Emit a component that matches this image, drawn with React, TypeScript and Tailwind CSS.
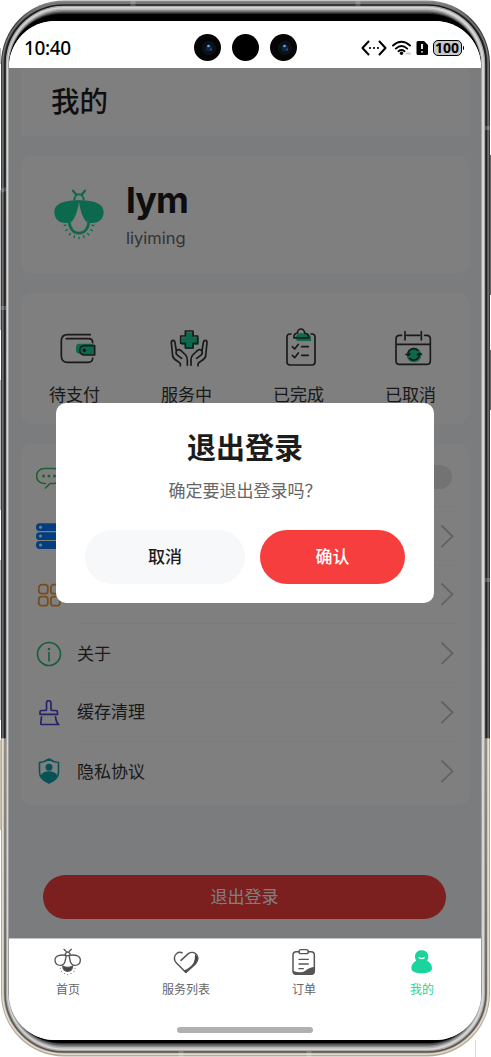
import type { ReactNode } from "react";
import { twMerge } from "tailwind-merge";

const FONT = "font-['Open_Sans','Noto_Sans_CJK_SC',sans-serif]";

export default function App() {
  return (
    <div
      className={twMerge(
        "relative w-[491px] h-[1057px] overflow-hidden bg-white pt-[21px] pl-[9px] pr-[10px] pb-[17px]",
        FONT,
      )}
    >
      <DeviceFrame />
      <div className="relative flex h-full flex-col overflow-hidden rounded-[46px] bg-white">
        <StatusBar />
        <main className="relative flex-1 bg-[#f7f8fa] px-3">
          <header className="h-[68px] bg-white pl-[30px] pt-[11px] text-[28.500px] leading-[44px] font-medium text-[#1f1f1f]">
            我的
          </header>
          <ProfileCard />
          <OrderCard />
          <MenuCard />
          <button className="mt-[70px] ml-[22px] block h-11 w-[403px] rounded-full bg-[#f63e3e] text-[17px] text-white">
            退出登录
          </button>
          <LogoutDialog />
        </main>
        <TabBar />
      </div>
    </div>
  );
}

function DeviceFrame() {
  return (
    <svg className="absolute inset-0" width="491" height="1057" viewBox="0 0 491 1057" fill="none">
      <defs>
        <linearGradient id="shell" x1="0" y1="0" x2="0" y2="1057" gradientUnits="userSpaceOnUse">
          <stop offset="0" stopColor="#8d918d" />
          <stop offset="0.02" stopColor="#3b3d3e" />
          <stop offset="0.698" stopColor="#34363a" />
          <stop offset="0.699" stopColor="#b3aa9b" />
          <stop offset="1" stopColor="#b3aa9b" />
        </linearGradient>
        <linearGradient id="shine" x1="0" y1="0" x2="0" y2="1057" gradientUnits="userSpaceOnUse">
          <stop offset="0" stopColor="#777" />
          <stop offset="0.698" stopColor="#6b6d6f" />
          <stop offset="0.699" stopColor="#ece6da" />
          <stop offset="1" stopColor="#e2dccf" />
        </linearGradient>
        <linearGradient id="seam" x1="0" y1="0" x2="0" y2="1057" gradientUnits="userSpaceOnUse">
          <stop offset="0" stopColor="#1b1b1b" />
          <stop offset="0.698" stopColor="#1f2022" />
          <stop offset="0.699" stopColor="#8f887c" />
          <stop offset="1" stopColor="#55524d" />
        </linearGradient>
      </defs>
      {/* side buttons and antenna lines */}
      <path d="M0 48v16M0 190v140M0 380v130M0 560v160" stroke="#777" />
      <path d="M0 740v90" stroke="#c9c1b2" strokeWidth="2" />
      <path d="M490.500 155v140M490.500 350v60" stroke="#666" />
      <path d="M475.500 1040v17" stroke="#ddd" />
      <rect x="1" y="0.500" width="489" height="1056" rx="63" fill="url(#shell)" />
      <rect x="2.800" y="2.800" width="485.400" height="1051.400" rx="61" stroke="url(#shine)" strokeWidth="1.400" />
      <rect x="5" y="5" width="481" height="1047" rx="59" fill="#999" stroke="url(#seam)" strokeWidth="1.600" />
      <rect x="6" y="6" width="479" height="1045" rx="58" fill="#aaa" />
      <rect x="7" y="7" width="477" height="1043" rx="57" fill="#d8d6d4" />
      <rect x="8" y="8.500" width="474" height="1040" rx="56" fill="#b4b4b4" />
      <rect x="8.500" y="10" width="473" height="1037" rx="55" fill="#8a8a8a" />
      <rect x="9" y="11.500" width="472" height="1034" rx="54" fill="#555" />
      <rect x="9" y="12.800" width="472" height="1031" rx="53" fill="#2a2a2a" />
      <rect x="9" y="14" width="472" height="1029" rx="52" fill="#000" />
      <path d="M133 1v5M358 1v5M181 1051v6M309 1051v6" stroke="#fff" strokeOpacity="0.18" strokeWidth="5" />
      <path d="M1 191l5-2M1 308h5M485 128h5M485 580h5" stroke="#fff" strokeOpacity="0.2" strokeWidth="4" />
    </svg>
  );
}

function StatusBar() {
  return (
    <div className="relative flex h-[47px] shrink-0 items-center bg-white pt-[6px] pl-[15px] pr-[17px] text-black">
      <span className="font-['Noto_Sans',sans-serif] text-[19px] leading-6 font-medium tracking-[-0.4px]">10:40</span>
      <div className="absolute top-[13px] left-[185px] flex gap-[11px]">
        <Camera />
        <span className="size-[27px] rounded-full bg-black" />
        <Camera />
      </div>
      <div className="ml-auto flex items-center">
        <svg width="26" height="16" viewBox="0 0 26 16" fill="none" stroke="#000" strokeWidth="2" strokeLinecap="round" strokeLinejoin="round">
          <path d="M7.500 1.500L1.500 8l6 6.500M18.500 1.500l6 6.500-6 6.500" />
          <path d="M9 8h.01M13 8h.01M17 8h.01" strokeWidth="2.200" />
        </svg>
        <svg className="ml-[5px]" width="20" height="16" viewBox="0 0 20 16" fill="none" stroke="#000" strokeWidth="1.900" strokeLinecap="round">
          <path d="M1 5.500Q9.500-2 18 5.500M3.800 8.600Q9.500 3.500 15.200 8.600M6.500 11.200q3-2.300 6 0" />
          <circle cx="9.500" cy="13.300" r="1.700" fill="#000" stroke="none" />
          <path d="M14.500 13.500h3.500" stroke="#ccc" />
        </svg>
        <svg className="ml-[4px]" width="12" height="14" viewBox="0 0 12 14">
          <path d="M2 0h6l4 4v8.500a1.500 1.500 0 0 1-1.500 1.500H2a1.500 1.500 0 0 1-1.500-1.500V1.500A1.500 1.500 0 0 1 2 0Z" />
          <path d="M6 3v5M6 10.200v1.300" stroke="#fff" strokeWidth="1.800" />
        </svg>
        <div className="ml-[5px] flex h-4 w-[29px] items-center justify-center rounded-[5px] border border-black bg-[#c8c8c8] pt-px font-['Noto_Sans',sans-serif] text-[14px] leading-none font-bold">
          100
        </div>
        <span className="ml-px h-1 w-[1.500px] rounded-r bg-black" />
      </div>
    </div>
  );
}

function Camera() {
  return (
    <svg width="27" height="27" viewBox="0 0 27 27">
      <circle cx="13.500" cy="13.500" r="13.500" fill="#050506" />
      <circle cx="15" cy="14" r="6.500" fill="#0a0f18" stroke="#121418" />
      <circle cx="15" cy="14" r="3.500" fill="#10233f" />
      <circle cx="14.500" cy="12" r="1.300" fill="#6fa6ea" />
      <circle cx="17" cy="15.500" r="0.900" fill="#2e5fa8" />
    </svg>
  );
}

function ProfileCard() {
  return (
    <section className="mt-5 flex h-[117px] items-center rounded-[10px] bg-white pl-[33px]">
      <svg width="50" height="52" viewBox="0 0 150 156" fill="none" stroke="#1bd39c">
        <path d="M75 33C40 35 1 38 1 70c0 22 18 37 45 31h58c27 6 45-9 45-31 0-32-39-35-74-37Z" fill="#1bd39c" stroke="none" />
        <path d="M46 98c1 46 57 46 58 0" fill="#fff" strokeWidth="8" />
        <path d="M75 37c-3 26-9 44-23 64h46C84 81 78 63 75 37Z" fill="#fff" stroke="none" />
        <path d="M61 34c0-24 28-24 28 0" strokeWidth="6" />
        <path d="M67 17L57 5M83 17L93 5" strokeWidth="7" strokeLinecap="round" />
        <path d="M29 110l8-2M34 126l7-5M45 139l5-7M59 147l3-8M75 151v-8M91 147l-3-8M105 139l-5-7M116 126l-7-5M121 110l-8-2" strokeWidth="4" />
      </svg>
      <div className="ml-[22px] font-['Inter',sans-serif]">
        <div className="text-[36px] leading-[42px] font-bold tracking-[-0.9px] text-[#1c1c1c]">lym</div>
        <div className="mt-[5px] text-[16.500px] leading-6 text-[#666]">liyiming</div>
      </div>
    </section>
  );
}

const orders: { label: string; icon: ReactNode }[] = [
  {
    label: "待支付",
    icon: (
      <>
        <rect x="57" y="47" width="54" height="30" rx="10" fill="#1bd39c" stroke="none" />
        <path d="M100 20H32q-19 0-19 19v45q0 19 19 19h62q13 0 13-13M28 32h67q12 0 12 12" />
        <path d="M112 53H82a14 14 0 0 0 0 28h31V53Z" fill="#1bd39c" />
        <circle cx="82" cy="67" r="3" fill="#333" />
      </>
    ),
  },
  {
    label: "服务中",
    icon: (
      <>
        <path d="M50 13h25v15h14v23H75v12H50V51H38V28h12Z" fill="#1bd39c" stroke="none" />
        <path d="M49 9h23v15h14v22H72v14H49V46H35V24h14Z" />
        <path d="M34 113v-6C28 99 13 96 11 84L7 44q0-7 5-7t6 7l4 25M22 69q6-8 14-1l14 13q5 6 5 16v15M22 69q-3 8 4 13l12 9" />
        <path d="M87 113v-6c6-8 21-11 23-23l4-40q0-7-5-7t-6 7l-4 25M99 69q-6-8-14-1L71 81q-5 6-5 16v15M99 69q3 8-4 13l-12 9" />
      </>
    ),
  },
  {
    label: "已完成",
    icon: (
      <>
        <path d="M42 28l10-12h28l10 10v13H48Z" fill="#1bd39c" stroke="none" />
        <path d="M30 18h-3q-9 0-9 9v75q0 9 9 9h66q9 0 9-9V27q0-9-9-9h-3" />
        <path d="M39 30h44q2-12-12-15-2-12-11-12t-11 12q-12 3-10 15Z" />
        <path d="M34 56l7 7 11-14M62 56h20M34 82l7 7 11-14M62 82h20" />
      </>
    ),
  },
  {
    label: "已取消",
    icon: (
      <>
        <circle cx="63" cy="81" r="22" fill="#1bd39c" stroke="none" />
        <path d="M26 22h-6Q9 22 9 33v65q0 11 11 11h81q11 0 11-11V33q0-11-11-11h-6M41 22h39M36 11v25M85 11v25M10 49h101" />
        <path d="M45 80a17 17 0 0 1 29-13M79 78a17 17 0 0 1-29 13M39 79l6 3 6-4M73 80l6-4 6 3" />
      </>
    ),
  },
];

function OrderCard() {
  return (
    <section className="mt-5 grid h-[131px] grid-cols-4 rounded-[10px] bg-white pt-[35px]">
      {orders.map((order) => (
        <div key={order.label} className="flex flex-col items-center">
          <svg width="40" height="40" viewBox="0 0 120 120" fill="none" stroke="#333" strokeWidth="5" strokeLinecap="round" strokeLinejoin="round">
            {order.icon}
          </svg>
          <span className="mt-[15px] pr-[5px] text-[17px] leading-6 text-[#333]">{order.label}</span>
        </div>
      ))}
    </section>
  );
}

type MenuItem = { id: string; label?: string; toggle?: boolean; icon: ReactNode };

const menu: MenuItem[] = [
  {
    id: "chat",
    toggle: true,
    icon: (
      <g stroke="#3bbf5c" strokeWidth="1.600">
        <path d="M9.500 19.500H8A7.500 7.500 0 0 1 8 4.500h10a7.500 7.500 0 0 1 0 15h-4l-4.500 4.500" />
        <path d="M7.500 12h.01M13 12h.01M18.500 12h.01" strokeWidth="3" />
      </g>
    ),
  },
  {
    id: "service",
    icon: (
      <g fill="#0a7cff">
        <rect x="0" y="0.300" width="26" height="7.800" rx="3.600" />
        <rect x="0" y="9.200" width="26" height="7.800" rx="3.600" />
        <rect x="0" y="18.100" width="26" height="7.800" rx="3.600" />
        <path d="M4.500 4.200h.01M4.500 13.100h.01M4.500 22h.01" stroke="#fff" strokeWidth="3" />
      </g>
    ),
  },
  {
    id: "apps",
    icon: (
      <g stroke="#eb9a3c" strokeWidth="1.800">
        <rect x="2.800" y="2.700" width="9" height="9" rx="2.800" />
        <rect x="14.800" y="2.700" width="9" height="9" rx="2.800" />
        <rect x="2.800" y="14.700" width="9" height="9" rx="2.800" />
        <rect x="14.800" y="14.700" width="9" height="9" rx="2.800" />
      </g>
    ),
  },
  {
    id: "about",
    label: "关于",
    icon: (
      <g stroke="#2ebc6f" strokeWidth="1.600">
        <circle cx="13" cy="13" r="11.500" />
        <path d="M13 11.500v8.500" />
        <path d="M13 8h.01" strokeWidth="2.600" />
      </g>
    ),
  },
  {
    id: "cache",
    label: "缓存清理",
    icon: (
      <g stroke="#4646d2" strokeWidth="1.700">
        <path d="M10.500 3q0-2.300 2.200-2.300T15 3v6.500q0 1 1.500 1h3.500q1.500 0 1.500 1.500v2.300H4V12q0-1.500 1.500-1.500H9q1.500 0 1.500-1Z" />
        <path d="M5.500 16.800L4.700 23.500q0 1 1 1h17q-2.500-2-3.200-7.700" />
      </g>
    ),
  },
  {
    id: "privacy",
    label: "隐私协议",
    icon: (
      <g stroke="#10a5aa" strokeWidth="1.600">
        <path d="M13 1q4 3 9.500 3.500v9.500q0 7-9.500 11-9.500-4-9.500-11V4.500Q9 4 13 1Z" />
        <circle cx="13" cy="9.300" r="3.500" fill="#10a5aa" stroke="none" />
        <path d="M5.500 18q1.500-4 7.500-4t7.500 4q-2 4.500-7.500 6.500Q7.500 22.500 5.500 18Z" fill="#10a5aa" />
      </g>
    ),
  },
];

function MenuCard() {
  return (
    <section className="mt-5 h-[361px] rounded-[10px] bg-white pt-[4px] pl-[15px] pr-[14px]">
      {menu.map((item, index) => (
        <div key={item.id} className="flex h-[58.800px] items-center">
          <svg width="26" height="26" viewBox="0 0 26 26" fill="none" strokeLinecap="round" strokeLinejoin="round">
            {item.icon}
          </svg>
          <div
            className={twMerge(
              "ml-[15px] flex h-full flex-1 items-center justify-between",
              index < menu.length - 1 && "border-b border-[#f8f8f8]",
            )}
          >
            <span className="text-[17px] text-[#333]">{item.label}</span>
            {item.toggle ? (
              <span className="mr-[3px] h-6 w-11 rounded-full bg-[#e6e6e6]" />
            ) : (
              <svg className="mr-px" width="14" height="24" viewBox="0 0 14 24" fill="none" stroke="#c4c4c4" strokeWidth="1.800">
                <path d="M1.500 1.500L12.500 12.300 1.500 23" />
              </svg>
            )}
          </div>
        </div>
      ))}
    </section>
  );
}

function LogoutDialog() {
  return (
    <div className="absolute inset-0 flex items-center justify-center bg-black/50">
      <div className="flex h-[200px] w-[378px] flex-col items-center rounded-[10px] bg-white px-[29px] pt-[23px]">
        <h2 className="text-[29px] leading-[44px] font-bold text-[#1c1c1c]">退出登录</h2>
        <p className="mt-[9px] text-[17px] leading-6 text-[#666]">确定要退出登录吗？</p>
        <div className="mt-[27px] flex w-full gap-[15px]">
          <button className="h-[54px] w-40 rounded-full bg-[#f7f8fa] text-[17px] font-medium text-[#1c1c1c]">取消</button>
          <button className="h-[54px] w-[145px] rounded-full bg-[#f63e3e] text-[17px] font-medium text-white">确认</button>
        </div>
      </div>
    </div>
  );
}

const tabs: { label: string; active?: boolean; icon: ReactNode }[] = [
  {
    label: "首页",
    icon: (
      <g stroke="#555" strokeWidth="4">
        <path d="M37 22C20 19 3 22 3 36c0 16 17 20 26 12 6-6 6-20 8-26ZM45 22c17-3 34 0 34 14 0 16-17 20-26 12-6-6-6-20-8-26Z" />
        <path d="M34 17q7-10 14 0v6H34ZM36 10l-6-6M46 10l6-6" />
        <path d="M26 54q15 8 30 0-2 16-15 16T26 54Z" fill="#444" />
        <path d="M19 61h.1M22 70h.1M31 77h.1M41 80h.1M51 77h.1M60 70h.1M63 61h.1" strokeWidth="3" />
      </g>
    ),
  },
  {
    label: "服务列表",
    icon: (
      <g>
        <path d="M69 19q10 6 8 19-1 7-8 14L42 76l-8-8q22-8 31-24 5-9 4-25Z" fill="#444" stroke="none" />
        <path d="M30 14C18 10 7 19 7 31q0 8 7 15l27 27 29-27c18-18-2-42-21-29L27 37" stroke="#555" strokeWidth="4.500" />
      </g>
    ),
  },
  {
    label: "订单",
    icon: (
      <g>
        <path d="M9 68q23 9 37 0 14-11 27-11v14q0 9-9 9H18q-9 0-9-12Z" fill="#555" stroke="none" />
        <path d="M27 11h-8q-10 0-10 10v48q0 10 10 10h44q10 0 10-10V21q0-10-10-10h-8" stroke="#555" strokeWidth="4.500" />
        <rect x="27" y="5" width="28" height="12" rx="6" stroke="#555" strokeWidth="4" />
        <path d="M27 34h28M27 48h28M27 62h13" stroke="#555" strokeWidth="4" />
      </g>
    ),
  },
  {
    label: "我的",
    active: true,
    icon: (
      <g fill="#1bd39c">
        <path d="M41 7c12 0 20 8 20 19 0 5-2 9-4 12 8 4 15 13 15 22 0 11-12 16-31 16s-31-5-31-16c0-9 7-18 15-22-2-3-4-7-4-12C21 15 29 7 41 7Z" />
        <path d="M33 29q8 6 16 0" fill="#fff" stroke="#fff" strokeWidth="3.500" />
      </g>
    ),
  },
];

function TabBar() {
  return (
    <nav className="flex h-[102px] shrink-0 flex-col items-center border-t border-[#c4c4c4] bg-white">
      <div className="grid w-full grid-cols-4 pt-[9px]">
        {tabs.map((tab) => (
          <div key={tab.label} className="flex flex-col items-center">
            <svg width="28" height="28" viewBox="0 0 84 84" fill="none" strokeLinecap="round" strokeLinejoin="round">
              {tab.icon}
            </svg>
            <span className={twMerge("mt-[5px] text-[12px] leading-[18px] text-[#666]", tab.active && "text-[#1bd39c]")}>
              {tab.label}
            </span>
          </div>
        ))}
      </div>
      <span className="mt-[28px] h-[6px] w-[136px] rounded-full bg-[#b0b0b0]" />
    </nav>
  );
}
